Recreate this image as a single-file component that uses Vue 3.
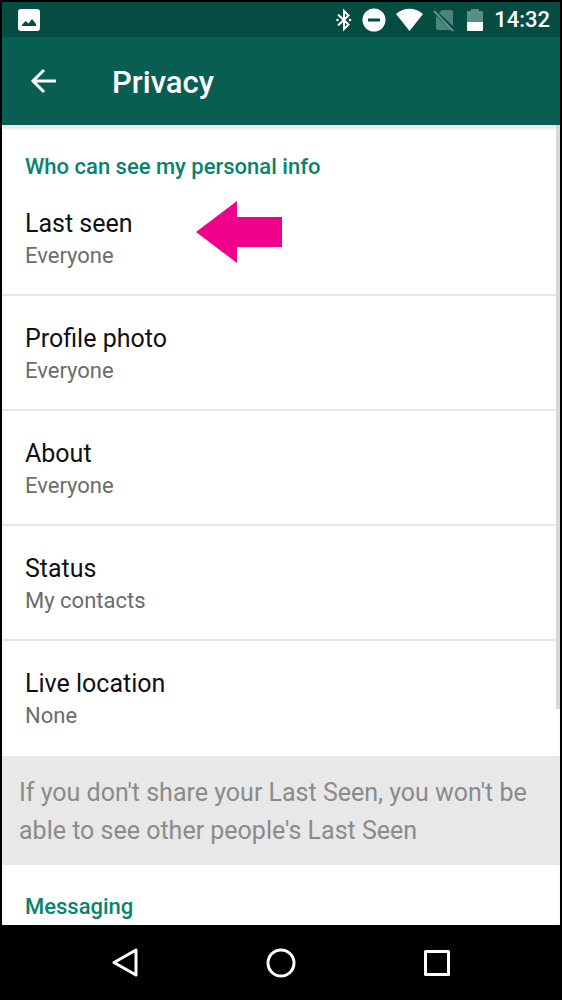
<script setup>
const settings = [
  { title: 'Last seen', value: 'Everyone', highlighted: true },
  { title: 'Profile photo', value: 'Everyone' },
  { title: 'About', value: 'Everyone' },
  { title: 'Status', value: 'My contacts' },
  { title: 'Live location', value: 'None' },
]
</script>

<template>
  <div class="phone">
    <div class="status-bar">
      <svg class="picture" width="22" height="22" viewBox="0 0 22 22" aria-hidden="true">
        <path fill="#fff" fill-rule="evenodd" d="M3 0h16a3 3 0 0 1 3 3v16a3 3 0 0 1-3 3H3a3 3 0 0 1-3-3V3a3 3 0 0 1 3-3zM4 17h14v-2l-4-5-3.500 4.500L7.500 12 4 16z" />
      </svg>
      <div class="indicators">
        <svg width="16" height="24" viewBox="0 0 16 24" fill="none" stroke="#fff" stroke-width="2" aria-hidden="true">
          <path d="M2 6.500L12.500 16.500L8 21V3L12.500 7.500L2 17.500" />
          <path d="M1.500 12h.01M14 12h.01" stroke-width="2.500" stroke-linecap="round" />
        </svg>
        <svg width="24" height="24" viewBox="0 0 24 24" aria-hidden="true">
          <circle cx="12" cy="12" r="11.500" fill="#fff" />
          <path d="M6 12h12" stroke="#054c43" stroke-width="3" />
        </svg>
        <svg width="27" height="24" viewBox="0 0 27 24" aria-hidden="true">
          <path d="M0 6C8-1 19-1 27 6L13.500 23z" fill="#fff" />
        </svg>
        <svg width="24" height="24" viewBox="0 0 24 24" aria-hidden="true">
          <path d="M9 2h9a2 2 0 0 1 2 2v14L6 5zM3 8l15 14H5a2 2 0 0 1-2-2z" fill="#4d857c" />
          <path d="M1 3l19 20" stroke="#5f958d" stroke-width="2" />
        </svg>
        <svg width="16" height="24" viewBox="0 0 16 24" aria-hidden="true">
          <path d="M0 15V4a1 1 0 0 1 1-1h3V1h8v2h3a1 1 0 0 1 1 1v11z" fill="#5a8f87" />
          <path d="M0 14h16v8a1 1 0 0 1-1 1H1a1 1 0 0 1-1-1z" fill="#fff" />
        </svg>
        <time>14:32</time>
      </div>
    </div>

    <header class="app-bar">
      <button class="back" type="button" aria-label="Back">
        <svg width="28" height="26" viewBox="0 0 28 26" fill="none" stroke="#fff" stroke-width="3" aria-hidden="true">
          <path d="M28 13H5M16 2L5 13L16 24" />
        </svg>
      </button>
      <h1>Privacy</h1>
    </header>

    <main class="content">
      <h2>Who can see my personal info</h2>
      <ul>
        <li v-for="item in settings" :key="item.title">
          <button class="setting" type="button">
            <span class="title">{{ item.title }}</span>
            <span class="value">{{ item.value }}</span>
          </button>
          <svg v-if="item.highlighted" class="pointer" width="86" height="62" viewBox="0 0 86 62" aria-hidden="true">
            <path d="M0 31L41 0v16h45v30H41v16z" fill="#f0018c" />
          </svg>
        </li>
      </ul>
      <p class="note">If you don't share your Last Seen, you won't be able to see other people's Last Seen</p>
      <h2>Messaging</h2>
      <span class="scroll-thumb"></span>
    </main>

    <nav class="nav-bar">
      <button type="button" aria-label="Back">
        <svg width="30" height="30" viewBox="0 0 30 30" fill="none" stroke="#fff" stroke-width="3" stroke-linejoin="round" aria-hidden="true">
          <path d="M26 2v25L4 14.500z" />
        </svg>
      </button>
      <button type="button" aria-label="Home">
        <svg width="30" height="30" viewBox="0 0 30 30" fill="none" stroke="#fff" stroke-width="3" aria-hidden="true">
          <circle cx="15" cy="15" r="13" />
        </svg>
      </button>
      <button type="button" aria-label="Recent apps">
        <svg width="30" height="30" viewBox="0 0 30 30" fill="none" stroke="#fff" stroke-width="3" stroke-linejoin="round" aria-hidden="true">
          <path d="M3.500 3.500h23v23h-23z" />
        </svg>
      </button>
    </nav>
  </div>
</template>

<style>
body {
  margin: 0;
  background: #000;
}
</style>

<style scoped>
.phone {
  box-sizing: border-box;
  display: flex;
  flex-direction: column;
  height: 100vh;
  padding: 2px 2px 0;
  background: #000;
  font-family: Roboto, "Liberation Sans", sans-serif;
}

svg {
  display: block;
  flex: none;
}

button {
  padding: 0;
  border: 0;
  background: none;
  color: inherit;
  font: inherit;
  cursor: pointer;
}

h1,
h2,
p,
ul {
  margin: 0;
  padding: 0;
}

.status-bar {
  display: flex;
  flex: none;
  align-items: center;
  justify-content: space-between;
  height: 35px;
  padding: 0 10px 0 16px;
  background: #054c43;
}

.indicators {
  display: flex;
  align-items: center;
  gap: 10px;
}

time {
  padding-left: 1px;
  color: #fff;
  font-size: 22px;
  font-weight: 500;
  line-height: 35px;
}

.app-bar {
  display: flex;
  flex: none;
  align-items: center;
  height: 88px;
  padding: 0 26px;
  gap: 56px;
  background: #095e54;
  color: #fff;
}

h1 {
  padding-top: 4px;
  font-size: 31px;
  font-weight: 500;
  line-height: 40px;
}

.content {
  position: relative;
  flex: 1;
  min-height: 0;
  overflow: hidden;
  background: #fff;
  box-shadow: inset 0 4px 2px #ece9e9;
}

h2 {
  padding: 28px 23px 0;
  color: #07836f;
  font-size: 22px;
  font-weight: 500;
  line-height: 28px;
}

ul {
  padding-bottom: 2px;
  list-style: none;
}

li {
  position: relative;
}

li + li {
  border-top: 2px solid #e6e6e6;
}

.setting {
  display: flex;
  flex-direction: column;
  width: 100%;
  padding: 26px 23px 23px;
  text-align: left;
}

.title {
  color: #111;
  font-size: 25px;
  line-height: 34px;
}

.value {
  color: #6c6c6c;
  font-size: 22px;
  line-height: 30px;
}

.pointer {
  position: absolute;
  top: 20px;
  left: 194px;
}

.note {
  padding: 18px 17px 15px;
  background: #e8e8e8;
  color: #8b8b8b;
  font-size: 25px;
  line-height: 38px;
}

.scroll-thumb {
  position: absolute;
  top: 0;
  right: 0;
  width: 4px;
  height: 73%;
  background: #d8d8d8;
}

.nav-bar {
  display: flex;
  flex: none;
  justify-content: center;
  height: 75px;
}

.nav-bar button {
  display: flex;
  align-items: center;
  justify-content: center;
  width: 28%;
}
</style>
